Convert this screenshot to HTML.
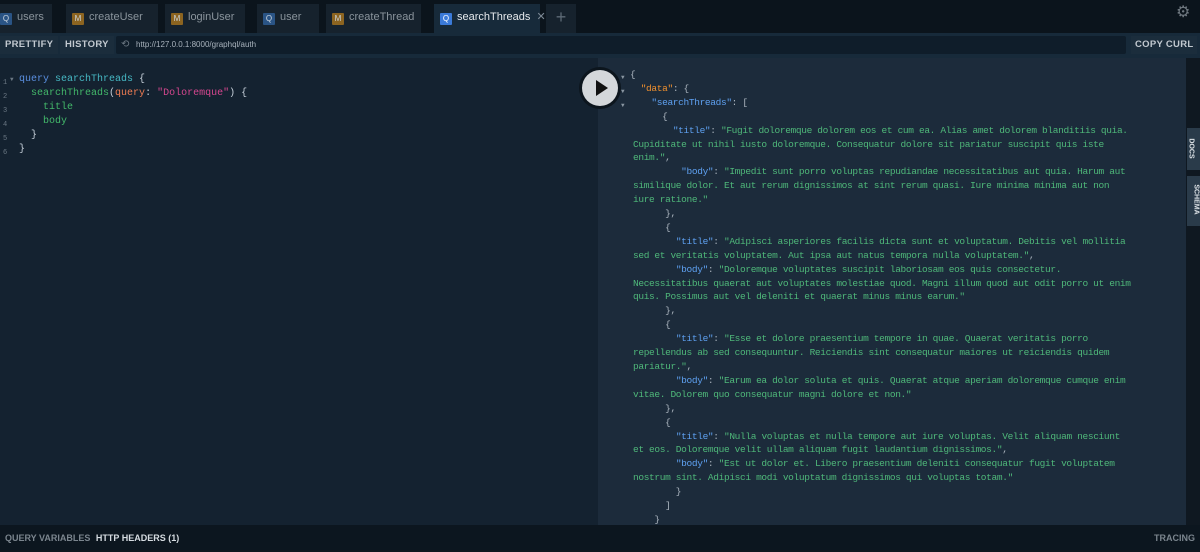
<!DOCTYPE html>
<html><head><meta charset="utf-8"><style>
*{margin:0;padding:0;box-sizing:border-box}
body{width:1200px;height:550px;overflow:hidden;background:#0f1821;font-family:"Liberation Sans",sans-serif;position:relative}
.top{position:absolute;left:0;top:0;width:1200px;height:33px;background:#0b141c}
.tab{position:absolute;top:4px;height:29px;background:#16222d;color:#8a949c;font-size:11px;line-height:26px;padding-left:6px;white-space:nowrap}
.tab.act{background:#172a3a;color:#e6e9ec}
.b{display:inline-block;width:12px;height:12px;font-size:8px;line-height:12px;text-align:center;color:#cbd5df;margin-right:5px;vertical-align:-1px;border-radius:1px}
.q{background:#2a5485}.m{background:#8c6420}.qa{background:#3b7ad8;color:#fff}
.bar{position:absolute;top:33px;left:0;width:1200px;height:25px;background:#172a3a}
.btn{position:absolute;top:3px;height:18px;background:#1b2d3c;color:#c2c9d0;font-size:9.5px;font-weight:bold;line-height:18px;padding:0 5px;letter-spacing:.3px;white-space:nowrap}
.url{position:absolute;left:116px;top:3px;width:1010px;height:18px;background:#0f1d2a;border-radius:2px;color:#a9b3bd;font-size:8px;line-height:18px;padding-left:20px}
.left{position:absolute;left:0;top:58px;width:598px;height:467px;background:#142230}
.right{position:absolute;left:598px;top:58px;width:588px;height:467px;background:#1c2b3b;overflow:hidden}
.code{position:absolute;font-family:"Liberation Mono",monospace;white-space:pre}
.l{font-size:10px;line-height:14px;color:#c6d0da}
.ln{font-size:7px;color:#6b7884}
.r{font-size:9.5px;letter-spacing:-.35px;line-height:13.9px;color:#4fb87a}
.k{color:#5a8fe0}.n{color:#46b8c4}.g{color:#43b86a}.s{color:#d6478f}.p{color:#f07c52}.w{color:#aab4be}.o{color:#f0902e}.j{color:#5ea0f0}
.bot{position:absolute;left:0;top:525px;width:1200px;height:25px;background:#0c161f;font-size:9px;font-weight:bold;line-height:27px;color:#7b858e}
.side{position:absolute;left:1187px;width:13px;background:#2a3b4a;color:#dfe4e8;font-size:7px;font-weight:bold}
.side span{position:absolute;transform:rotate(90deg);white-space:nowrap;left:-6px}
</style></head><body>
<div class="top">
<div class="tab" style="left:0;width:52px;padding-left:0"><span class="b q">Q</span>users</div>
<div class="tab" style="left:66px;width:92px"><span class="b m">M</span>createUser</div>
<div class="tab" style="left:165px;width:80px"><span class="b m">M</span>loginUser</div>
<div class="tab" style="left:257px;width:62px"><span class="b q">Q</span>user</div>
<div class="tab" style="left:326px;width:95px"><span class="b m">M</span>createThread</div>
<div class="tab act" style="left:434px;width:106px"><span class="b qa">Q</span>searchThreads <span style="color:#7d8a96;margin-left:3px">✕</span></div>
<div class="tab" style="left:546px;width:30px;font-size:18px;text-align:center;padding:0;color:#5d6a76">+</div>
<div style="position:absolute;left:1176px;top:2px;color:#6f7880;font-size:16px">⚙</div>
</div>
<div class="bar">
<div class="btn" style="left:0">PRETTIFY</div>
<div class="btn" style="left:60px">HISTORY</div>
<div class="url"><span style="position:absolute;left:5px;color:#6c7883;font-size:10px">⟲</span>http://127.0.0.1:8000/graphql/auth</div>
<div class="btn" style="left:1131px;width:66px;padding:0 4px">COPY CURL</div>
</div>
<div class="left">
<div class="code ln" style="left:3px;top:18px;line-height:14px">1
2
3
4
5
6</div>
<div class="code ln" style="left:10px;top:18px;font-size:6px">▼</div>
<div class="code l" style="left:19px;top:15px"><span class="k">query</span> <span class="n">searchThreads</span> {
  <span class="g">searchThreads</span>(<span class="p">query</span>: <span class="s">"Doloremque"</span>) {
    <span class="g">title</span>
    <span class="g">body</span>
  }
}</div>
</div>
<div class="right">
<div class="code r" style="left:32px;top:10px"><span class="w">{
  <span class="o">"data"</span>: {
    <span class="j">"searchThreads"</span>: [
      {
        <span class="j">"title"</span>: </span>"Fugit doloremque dolorem eos et cum ea. Alias amet dolorem blanditiis quia.</div>
<div class="code r" style="left:35px;top:79.5px">Cupiditate ut nihil iusto doloremque. Consequatur dolore sit pariatur suscipit quis iste
enim."<span class="w">,</span>
         <span class="j">"body"</span><span class="w">: </span>"Impedit sunt porro voluptas repudiandae necessitatibus aut quia. Harum aut
similique dolor. Et aut rerum dignissimos at sint rerum quasi. Iure minima minima aut non
iure ratione."
<span class="w">      },
      {
        <span class="j">"title"</span>: </span>"Adipisci asperiores facilis dicta sunt et voluptatum. Debitis vel mollitia
sed et veritatis voluptatem. Aut ipsa aut natus tempora nulla voluptatem."<span class="w">,</span>
        <span class="j">"body"</span><span class="w">: </span>"Doloremque voluptates suscipit laboriosam eos quis consectetur.
Necessitatibus quaerat aut voluptates molestiae quod. Magni illum quod aut odit porro ut enim
quis. Possimus aut vel deleniti et quaerat minus minus earum."
<span class="w">      },
      {
        <span class="j">"title"</span>: </span>"Esse et dolore praesentium tempore in quae. Quaerat veritatis porro
repellendus ab sed consequuntur. Reiciendis sint consequatur maiores ut reiciendis quidem
pariatur."<span class="w">,</span>
        <span class="j">"body"</span><span class="w">: </span>"Earum ea dolor soluta et quis. Quaerat atque aperiam doloremque cumque enim
vitae. Dolorem quo consequatur magni dolore et non."
<span class="w">      },
      {
        <span class="j">"title"</span>: </span>"Nulla voluptas et nulla tempore aut iure voluptas. Velit aliquam nesciunt
et eos. Doloremque velit ullam aliquam fugit laudantium dignissimos."<span class="w">,</span>
        <span class="j">"body"</span><span class="w">: </span>"Est ut dolor et. Libero praesentium deleniti consequatur fugit voluptatem
nostrum sint. Adipisci modi voluptatum dignissimos qui voluptas totam."
<span class="w">        }
      ]
    }</span></div>
<div class="code" style="left:23px;top:13px;font-size:6px;line-height:13.9px;color:#8a96a2">▼
▼
▼</div>
</div>
<div style="position:absolute;left:579px;top:67px;width:42px;height:42px;border-radius:50%;background:#0c151d"></div>
<div style="position:absolute;left:582px;top:70px;width:36px;height:36px;border-radius:50%;background:#d4d7da"></div>
<div style="position:absolute;left:596px;top:80px;width:0;height:0;border-left:12px solid #111;border-top:8px solid transparent;border-bottom:8px solid transparent"></div>
<div class="side" style="top:128px;height:42px"><span style="top:17px">DOCS</span></div>
<div class="side" style="top:176px;height:50px"><span style="top:20px">SCHEMA</span></div>
<div class="bot"><span style="margin-left:5px">QUERY VARIABLES</span> <span style="color:#d6dce1;margin-left:3px">HTTP HEADERS (1)</span><span style="position:absolute;right:5px">TRACING</span></div>
</body></html>
